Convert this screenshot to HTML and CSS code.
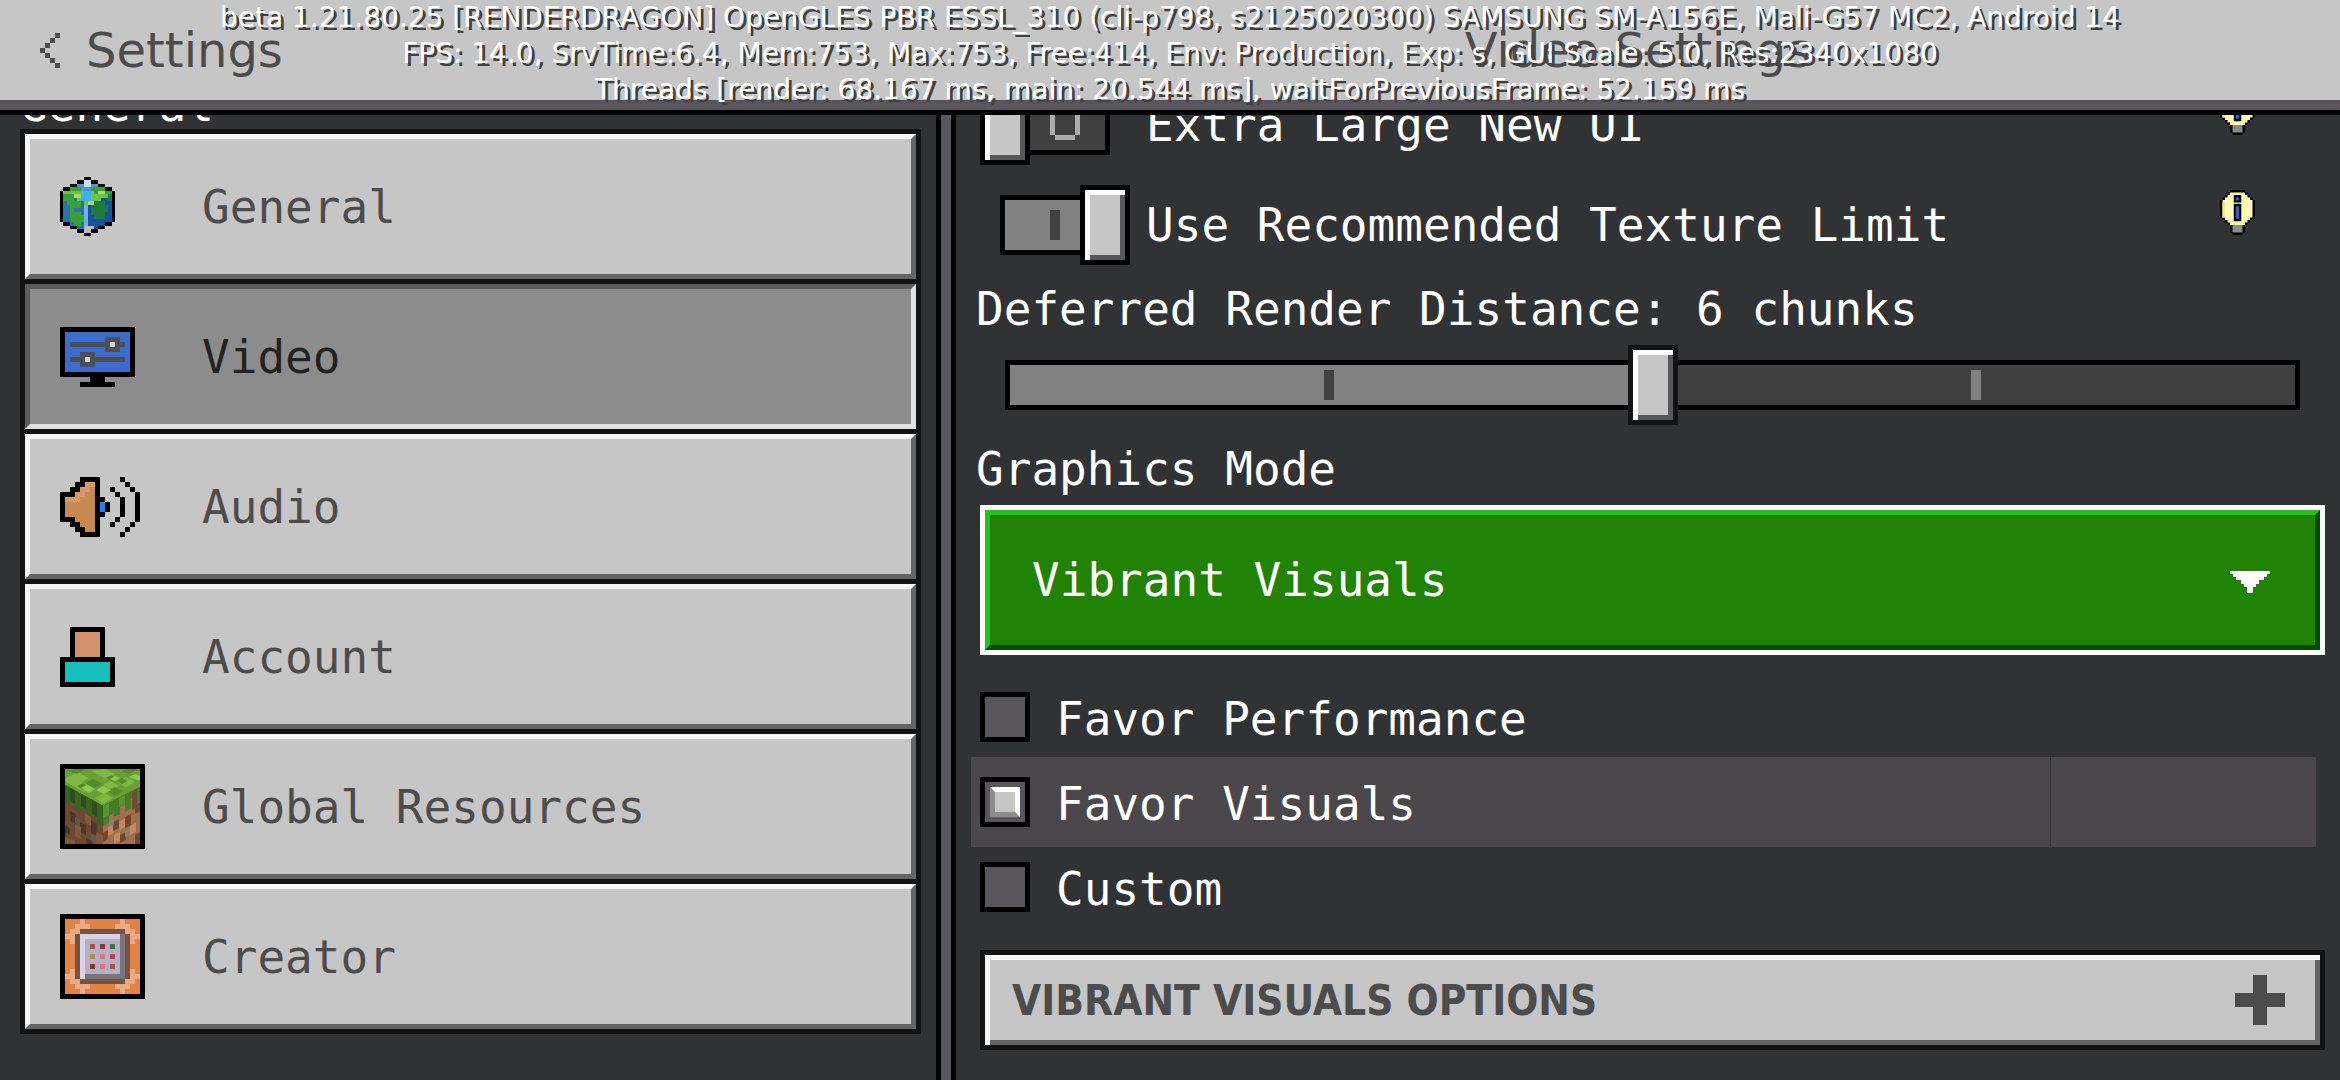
FILE: index.html
```html
<!DOCTYPE html>
<html lang="en">
<head>
    <meta charset="UTF-8">
    <meta name="viewport" content="width=device-width, initial-scale=1.0">
    <title>Video Settings</title>
    <link rel="stylesheet" href="styles.css">
</head>
<body>
    <header class="top-bar">
        <button type="button" class="back">
            <svg class="back-icon" viewBox="0 0 4 7" shape-rendering="crispEdges" aria-hidden="true">
                <path d="M3 0h1v1h-1zM2 1h1v1h-1zM1 2h1v1h-1zM0 3h1v1h-1zM1 4h1v1h-1zM2 5h1v1h-1zM3 6h1v1h-1z"/>
            </svg>
            Settings
        </button>
        <h1 class="page-title">Video Settings</h1>

        <!-- Debug overlay -->
        <div class="debug">
            <p>beta 1.21.80.25 [RENDERDRAGON] OpenGLES PBR ESSL_310 (cli-p798, s2125020300) SAMSUNG SM-A156E, Mali-G57 MC2, Android 14</p>
            <p>FPS: 14.0, SrvTime:6.4, Mem:753, Max:753, Free:414, Env: Production, Exp: s, GUI Scale: 5.0, Res:2340x1080</p>
            <p>Threads [render: 68.167 ms, main: 20.544 ms], waitForPreviousFrame: 52.159 ms</p>
        </div>
    </header>

    <div class="panels">
        <nav class="sidebar">
            <h2 class="sidebar-title">General</h2>
            <div class="menu">
                <button type="button" class="menu-item">
                    <span class="menu-icon">
                        <svg width="55" height="59" viewBox="0 0 16 17" preserveAspectRatio="none" shape-rendering="crispEdges" aria-hidden="true">
                            <path fill="#000" d="M7 0h2v1h2v1h2v1h2v1h1v9h-1v1h-2v1h-2v1h-2v1h-2v-1h-2v-1h-2v-1h-2v-1h-1v-9h1v-1h2v-1h2v-1h2z"/>
                            <path fill="#2a6fb0" d="M1 5h7v11h-1v-1h-2v-1h-2v-1h-2z"/>
                            <path fill="#17509b" d="M8 5h7v8h-2v1h-2v1h-2v1h-1z"/>
                            <path fill="#4f93d8" d="M7 1h2v1h2v1h2v1h2v1h-2v1h-3v1h-4v-1h-3v-1h-2v-1h2v-1h2v-1h2z"/>
                            <path fill="#6cc24a" d="M1 4h3v-1h2v1h1v2h-2v1h2v-1h-3v-1h-3zM9 4h4v1h2v1h-3v1h-3v1h-2v-1h2v-2z"/>
                            <path fill="#38a135" d="M3 3h3v1h-3zM9 3h4v1h2v1h-5v-1h-1zM1 5h3v2h2v2h-2v1h-1v-2h-1v-1h-1zM3 10h3v1h1v2h-1v1h-2v-1h-1z"/>
                            <path fill="#a3dc6d" d="M4 5h3v1h-3zM8 7h2v1h-2zM11 4h2v1h-2z"/>
                            <path fill="#1f7a3c" d="M10 7h3v1h1v2h-1v2h-3v-1h-1v-3h1zM14 5h1v2h-1z"/>
                            <path fill="#36b3ee" d="M7 4h2v3h-2zM6 5h1v2h-1z"/>
                            <path fill="#c3e2f2" d="M7 1h2v2h-2z"/>
                            <path fill="#6bb4e6" d="M7 8h1v6h-1z"/>
                            <path fill="#b9bdbd" d="M7 14h1v2h-1zM8 14h2v1h-1v1h-1z"/>
                        </svg>
                    </span>
                    General
                </button>
                <button type="button" class="menu-item selected">
                    <span class="menu-icon">
                        <svg width="75" height="60" viewBox="0 0 15 12" shape-rendering="crispEdges" aria-hidden="true">
                            <path fill="#000" d="M0 0h15v10h-6v1h2v1h-7v-1h2v-1h-6z"/>
                            <path fill="#3b6cce" d="M1 1h13v8h-13z"/>
                            <path fill="#4c4f55" d="M2 3h11v1h-11zM9 2h3v3h-3zM2 6h11v1h-11zM4 5h3v3h-3z"/>
                            <path fill="#dcdcdc" d="M10 3h1v1h-1zM5 6h1v1h-1z"/>
                        </svg>
                    </span>
                    Video
                </button>
                <button type="button" class="menu-item">
                    <span class="menu-icon">
                        <svg width="80" height="60" viewBox="0 0 16 12" shape-rendering="crispEdges" aria-hidden="true">
                            <path fill="#000" d="M4 0h4v4h1v1h1v2h-1v1h-1v4h-4v-1h-1v-1h-1v-1h-2v-6h2v-1h1v-1h1z"/>
                            <path fill="#c68a50" d="M5 1h2v10h-2v-1h-1v-1h-1v-1h-2v-4h2v-1h1v-1h1z"/>
                            <path fill="#d69a68" d="M5 1h2v1h-1v1h-1v1h-1v1h-1v-1h-2v1h2v-2h1v-1h1z"/>
                            <path fill="#2484ea" d="M8 5h1v2h-1z"/>
                            <path fill="#000" d="M10 2h1v1h-1zM11 3h1v1h-1zM12 4h1v4h-1zM11 8h1v1h-1zM10 9h1v1h-1zM12 0h1v1h-1zM13 1h1v1h-1zM14 2h1v1h-1zM15 3h1v6h-1zM14 9h1v1h-1zM13 10h1v1h-1zM12 11h1v1h-1z"/>
                        </svg>
                    </span>
                    Audio
                </button>
                <button type="button" class="menu-item">
                    <span class="menu-icon">
                        <svg width="55" height="60" viewBox="0 0 11 12" shape-rendering="crispEdges" aria-hidden="true">
                            <path fill="#000" d="M2 0h7v6h2v6h-11v-6h2z"/>
                            <path fill="#d4916c" d="M3 1h5v5h-5z"/>
                            <path fill="#16bfbd" d="M1 7h9v4h-9z"/>
                        </svg>
                    </span>
                    Account
                </button>
                <button type="button" class="menu-item">
                    <span class="menu-icon">
                        <svg width="85" height="85" viewBox="-5 -5 85 85" aria-hidden="true">
                            <path fill="#000" d="M-5-5h85v85h-85z"/>
                            <!-- top face -->
                            <path fill="#6a9f35" d="M0 0h75v18l-37 19l-38-21z"/>
                            <path fill="#7fb942" d="M0 10l12-7l12 6l-7 4l10 5l-8 5l-19-11zM26 2l14-2l10 5l-9 5zM30 29l9-5l9 5l-10 6zM52 13l9-5l9 5l-9 5zM38 16l7-4l9 5l-7 4z"/>
                            <path fill="#568a2a" d="M3 2l7-2h10l-8 5zM20 14l8-4l9 5l-8 4zM41 9l5-3l6 3l-5 3zM52 12l5-3l5 3l-5 3zM42 22l8-4l8 4l-8 5zM56 2l9-2h8l-9 5zM12 17l6-3l6 4l-6 3z"/>
                            <path fill="#8fc94f" d="M31 21l7-4l8 4l-7 4zM16 19l6-3l8 4l-6 4zM45 10l5-3l5 2l-5 3zM64 8l6-3l5 2v5z"/>
                            <!-- dirt -->
                            <path fill="#6b4a33" d="M0 16l38 21v38h-38z"/>
                            <path fill="#a06f4b" d="M75 18l-37 19v38h37z"/>
                            <path fill="#4e3625" d="M5 42l6 3v10l-6-3zM15 53l6 3v10l-6-3zM26 51l6 4v12l-6-3zM0 56l5 3v7l-5-3zM21 69l6 3v3h-6z"/>
                            <path fill="#82593c" d="M10 55l6 3v12l-6-3zM31 63l7 4v8h-7zM20 44l6 4v9l-6-4zM0 68l10 4v3h-10z"/>
                            <path fill="#5f5a57" d="M10 48l5 3v6l-5-3zM26 65l5 3v6l-5-3z"/>
                            <path fill="#c18a61" d="M43 58l6-3v9l-6 3zM54 53l6-4v9l-6 4zM65 57l6-3v9l-6 3zM49 66l6-3v9l-6 3z"/>
                            <path fill="#70482e" d="M48 53l6-3v9l-6 3zM60 48l6-3v11l-6 3zM38 64l5-3v9l-5 3zM55 66l6-3v8l-6 3zM70 36l5-3v9l-5 3zM70 66l5-3v12h-5z"/>
                            <path fill="#86817b" d="M60 62l5-3v6l-5 3zM44 53l5-3v5l-5 3z"/>
                            <!-- grass overhang -->
                            <path fill="#376521" d="M0 16l38 21v20l-6-3v-6l-6-3v3l-5-3v-5l-5-3v5l-6-3v-5l-5-3v5l-5-3z"/>
                            <path fill="#2b501b" d="M5 19l5 3v13l-5-3zM16 25l5 3v12l-5-3zM27 31l5 3v14l-5-3z"/>
                            <path fill="#477c26" d="M75 18l-37 19v20l6-3v-7l5-3v4l6-3v-7l5-3v8l6-4v-9l5-3v7l4-2z"/>
                            <path fill="#5a922f" d="M38 37l6-3v12l-6 3zM54 29l6-3v9l-6 3z"/>
                            <path fill="#704b30" d="M67 23l5-3v18l-5 3z"/>
                        </svg>
                    </span>
                    Global Resources
                </button>
                <button type="button" class="menu-item">
                    <span class="menu-icon">
                        <svg width="85" height="85" viewBox="-1 -1 17 17" shape-rendering="crispEdges" aria-hidden="true">
                            <path fill="#000" d="M-1-1h17v17h-17z"/>
                            <path fill="#e08344" d="M0 0h15v15h-15z"/>
                            <path fill="#edaa80" d="M3 0h1v1h1v1h-2v1h-1v2h-1v-1h-1v-1h1v-1h1v-1h1zM11 0h1v1h1v1h1v1h1v1h-1v1h-1v-2h-1v-1h-2v-1h1zM0 11h1v-1h1v2h1v1h2v1h-1v1h-1v-1h-1v-1h-1v-1h-1zM15 11v1h-1v1h-1v1h-1v1h-1v-1h-1v-1h2v-1h1v-2h1v1z"/>
                            <path fill="#765240" d="M3 2h9v1h1v9h-1v1h-9v-1h-1v-9h1z"/>
                            <path fill="#77747f" d="M3 3h9v9h-9z"/>
                            <path fill="#d9d4e5" d="M3 3h8v1h-7v8h-1z"/>
                            <path fill="#b5b1c2" d="M4 4h7v7h-7z"/>
                            <path fill="#a55351" d="M5 5h1v1h-1zM9 9h1v1h-1z"/>
                            <path fill="#963038" d="M7 5h1v1h-1zM5 9h1v1h-1z"/>
                            <path fill="#4f6b3f" d="M9 5h1v1h-1z"/>
                            <path fill="#b58a4b" d="M5 7h1v1h-1z"/>
                            <path fill="#dd7580" d="M7 7h1v1h-1zM7 9h1v1h-1z"/>
                            <path fill="#b93f4b" d="M9 7h1v1h-1z"/>
                        </svg>
                    </span>
                    Creator
                </button>
            </div>
        </nav>

        <main class="content">
            <div class="scrolled">
                <div class="toggle-row">
                    <input type="checkbox" class="toggle" id="largeUi">
                    <label for="largeUi">Extra Large New UI</label>
                    <svg class="bulb" viewBox="0 0 14 18" aria-hidden="true">
                        <path fill="#000" d="M4 0h6v1h1v1h1v1h1v1h1v7h-1v1h-1v1h-1v1h-1v3h-1v1h-4v-1h-1v-3h-1v-1h-1v-1h-1v-1h-1v-7h1v-1h1v-1h1v-1h1z"/>
                        <path fill="#fdfab5" d="M4 1h6v1h1v1h1v1h1v7h-1v1h-1v1h-1v1h-6v-1h-1v-1h-1v-1h-1v-7h1v-1h1v-1h1z"/>
                        <path fill="#eee78e" d="M1 5h1v6h-1z"/>
                        <path fill="#8b8b86" d="M5 14h4v3h-4z"/>
                        <path fill="#000" d="M5.500 2h3v3h-3zM5.500 5.500h3v7h-3z"/>
                        <path fill="#405bb6" d="M6.300 3h1.400v1.200h-1.400zM6.300 6.500h1.400v5h-1.400z"/>
                    </svg>
                </div>
                <div class="toggle-row">
                    <input type="checkbox" class="toggle" id="textureLimit" checked>
                    <label for="textureLimit">Use Recommended Texture Limit</label>
                    <svg class="bulb" viewBox="0 0 14 18" aria-hidden="true">
                        <path fill="#000" d="M4 0h6v1h1v1h1v1h1v1h1v7h-1v1h-1v1h-1v1h-1v3h-1v1h-4v-1h-1v-3h-1v-1h-1v-1h-1v-1h-1v-7h1v-1h1v-1h1v-1h1z"/>
                        <path fill="#fdfab5" d="M4 1h6v1h1v1h1v1h1v7h-1v1h-1v1h-1v1h-6v-1h-1v-1h-1v-1h-1v-7h1v-1h1v-1h1z"/>
                        <path fill="#eee78e" d="M1 5h1v6h-1z"/>
                        <path fill="#8b8b86" d="M5 14h4v3h-4z"/>
                        <path fill="#000" d="M5.500 2h3v3h-3zM5.500 5.500h3v7h-3z"/>
                        <path fill="#405bb6" d="M6.300 3h1.400v1.200h-1.400zM6.300 6.500h1.400v5h-1.400z"/>
                    </svg>
                </div>

                <label class="field-label" for="renderDistance">Deferred Render Distance: 6 chunks</label>
                <input type="range" class="slider" id="renderDistance" min="4" max="8" value="6">

                <label class="field-label mode-label" for="graphicsMode">Graphics Mode</label>
                <div class="dropdown">
                    <select id="graphicsMode">
                        <option>Vibrant Visuals</option>
                    </select>
                    <svg class="arrow" viewBox="0 0 14 7" preserveAspectRatio="none" shape-rendering="crispEdges" aria-hidden="true">
                        <path fill="#fff" d="M0 0h14v1h-1v1h-1v1h-2v1h-1v1h-1v2h-2v-2h-1v-1h-1v-1h-2v-1h-1v-1h-1z"/>
                    </svg>
                </div>

                <div class="presets">
                    <div class="preset">
                        <label><input type="radio" name="preset"><span>Favor Performance</span></label>
                    </div>
                    <div class="preset active">
                        <label><input type="radio" name="preset" checked><span>Favor Visuals</span></label>
                        <div class="preset-end"></div>
                    </div>
                    <div class="preset">
                        <label><input type="radio" name="preset"><span>Custom</span></label>
                    </div>
                </div>

                <button type="button" class="options">
                    VIBRANT VISUALS OPTIONS
                    <svg width="50" height="50" viewBox="0 0 50 50" aria-hidden="true">
                        <path fill="#4c4c4c" d="M18 0h14v18h18v14h-18v18h-14v-18h-18v-14h18z"/>
                    </svg>
                </button>
            </div>
        </main>
    </div>
</body>
</html>
```
FILE: styles.css
```css
*, *::before, *::after {
    box-sizing: border-box;
}

body {
    display: flex;
    flex-direction: column;
    height: 100vh;
    margin: 0;
    overflow: hidden;
    background-color: #313233;
    color: #fff;
    font-family: "DejaVu Sans Mono", monospace;
    font-size: 46px;
}

h1, h2, p {
    margin: 0;
    font-weight: normal;
}

button, select, input {
    margin: 0;
    font: inherit;
    border-radius: 0;
}

/* Header */
.top-bar {
    position: relative;
    display: grid;
    grid-template-columns: 40% 1fr;
    flex: none;
    height: 115px;
    background-color: #c6c6c6;
    border-bottom: 5px solid #000;
    box-shadow: inset 0 -10px #58565a;
    color: #4c4c4c;
    font-family: "DejaVu Sans", sans-serif;
    font-size: 48px;
    line-height: 60px;
}

.back {
    display: flex;
    align-items: center;
    gap: 26px;
    height: 100px;
    padding: 0 40px;
    border: none;
    background: none;
    color: inherit;
}

.back-icon {
    width: 20px;
    height: 35px;
    fill: #4c4c4c;
}

.page-title {
    font-size: inherit;
    line-height: 100px;
    text-align: center;
}

.debug {
    position: absolute;
    top: 0;
    left: 0;
    right: 0;
    color: #fff;
    font-size: 28px;
    line-height: 36px;
    text-align: center;
    text-shadow: 3px 3px #404040;
    white-space: nowrap;
    pointer-events: none;
}

.panels {
    display: grid;
    grid-template-columns: 40% 1fr;
    flex: 1;
    min-height: 0;
}

/* Sidebar */
.sidebar {
    padding: 0 15px 0 20px;
    overflow: hidden;
}

.sidebar-title {
    height: 60px;
    margin-top: -46px;
    padding-top: 6px;
    font-size: inherit;
    line-height: 60px;
}

.menu {
    display: flex;
    flex-direction: column;
    gap: 5px;
    padding: 5px;
    background-color: #131313;
}

.menu-item {
    display: flex;
    align-items: center;
    height: 145px;
    padding: 0 30px;
    border: 5px solid;
    border-color: #f7f7f7 #656465 #656465 #f7f7f7;
    background-color: #c6c6c6;
    color: #4c4c4c;
    text-align: left;
}

.menu-item.selected {
    border-color: #5b5b5c #e0e0e0 #e0e0e0 #5b5b5c;
    background-color: #8c8c8c;
    color: #222;
}

.menu-icon {
    display: flex;
    width: 142px;
}

/* Settings panel */
.content {
    padding: 0 15px 0 39px;
    overflow: hidden;
    border-left: 5px solid #000;
    box-shadow: inset 10px 0 #58565a, inset 15px 0 #000;
}

.scrolled {
    display: flex;
    flex-direction: column;
    margin-top: -40px;
}

.toggle-row {
    display: flex;
    align-items: center;
    height: 100px;
    line-height: 60px;
}

.toggle-row label {
    flex: 1;
    margin-left: 16px;
}

.toggle {
    position: relative;
    width: 150px;
    height: 80px;
    appearance: none;
}

.toggle::before {
    content: "";
    position: absolute;
    inset: 10px 20px;
    border: 5px solid #000;
    background:
        linear-gradient(#acacac, #acacac) 50px 10px / 20px 5px no-repeat,
        linear-gradient(#acacac, #acacac) 50px 35px / 20px 5px no-repeat,
        linear-gradient(#acacac, #acacac) 45px 15px / 5px 20px no-repeat,
        linear-gradient(#acacac, #acacac) 70px 15px / 5px 20px no-repeat,
        #404040;
}

.toggle:checked::before {
    background: linear-gradient(#404040, #404040) 45px 10px / 10px 30px no-repeat, #818181;
}

.toggle::after {
    content: "";
    position: absolute;
    top: 0;
    left: 0;
    width: 50px;
    height: 80px;
    border: 5px solid #000;
    background-color: #c6c6c6;
    box-shadow: inset 5px 5px #fff, inset -5px -5px #58585a;
}

.toggle:checked::after {
    left: 100px;
}

.bulb {
    width: 35px;
    height: 45px;
    margin: 0 70px 25px 0;
}

.field-label {
    margin: 4px 0 0 -4px;
    line-height: 60px;
}

.slider {
    width: auto;
    height: 50px;
    margin: 21px 25px 0;
    border: 5px solid #000;
    appearance: none;
    background:
        linear-gradient(#404040, #404040) calc(25% - 5px) 50% / 10px 30px no-repeat,
        linear-gradient(#818181, #818181) calc(75% + 5px) 50% / 10px 30px no-repeat,
        linear-gradient(90deg, #818181 50%, #404040 50%);
}

.slider::-webkit-slider-runnable-track {
    height: 40px;
}

.slider::-webkit-slider-thumb {
    width: 50px;
    height: 80px;
    margin-top: -20px;
    border: 5px solid #131313;
    appearance: none;
    background-color: #c6c6c6;
    box-shadow: inset 5px 5px #fff, inset -5px -5px #58585a;
}

.mode-label {
    margin-top: 29px;
}

.dropdown {
    position: relative;
    height: 150px;
    margin-top: 6px;
    border: 5px solid #fff;
}

.dropdown select {
    width: 100%;
    height: 140px;
    padding: 0 42px;
    border: 5px solid;
    border-color: #22c417 #004d00 #004d00 #22c417;
    appearance: none;
    background-color: #208306;
    color: #fff;
}

.arrow {
    position: absolute;
    top: 61px;
    right: 50px;
    width: 40px;
    height: 22px;
    pointer-events: none;
}

.presets {
    margin: 22px 9px 23px -9px;
}

.preset {
    display: flex;
    gap: 1px;
    height: 80px;
}

.preset label {
    display: flex;
    align-items: center;
    flex: 1;
    gap: 26px;
    padding-left: 9px;
}

.preset span {
    padding-top: 4px;
}

.preset.active {
    height: 90px;
}

.preset.active label,
.preset-end {
    background-color: #4a484a;
}

.preset-end {
    width: 265px;
}

.preset input {
    width: 50px;
    height: 50px;
    border: 5px solid #000;
    appearance: none;
    background-color: #58565a;
}

.preset input:checked::before {
    content: "";
    display: block;
    width: 30px;
    height: 30px;
    margin: 5px;
    border: 5px solid;
    border-color: #fff #fff #8c8c8c #8c8c8c;
    background-color: #c6c6c6;
}

.options {
    display: flex;
    align-items: center;
    justify-content: space-between;
    height: 100px;
    padding: 0 35px 0 27px;
    border: 5px solid #131313;
    background-color: #c6c6c6;
    box-shadow: inset 5px 5px #f7f7f7, inset -5px -5px #656465;
    color: #4c4c4c;
    font-family: "DejaVu Sans Condensed", sans-serif;
    font-size: 42px;
    font-weight: bold;
}
```
